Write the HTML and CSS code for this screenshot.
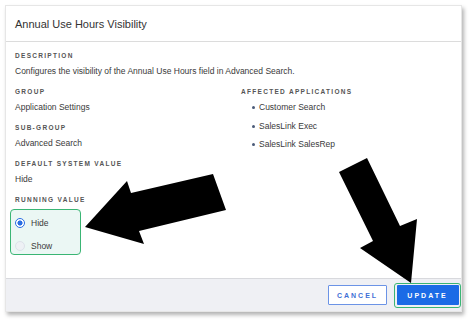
FILE: index.html
```html
<!DOCTYPE html>
<html lang="en">
<head>
  <meta charset="UTF-8" />
  <title>Annual Use Hours Visibility</title>
  <link rel="stylesheet" href="styles.css">
</head>
<body>
  <div class="dialog">
    <div class="dialog-header">Annual Use Hours Visibility</div>

    <div class="dialog-body">
      <div class="field wide">
        <div class="label">Description</div>
        <div class="value">Configures the visibility of the Annual Use Hours field in Advanced Search.</div>
      </div>

      <div class="col">
        <div class="field">
          <div class="label">Group</div>
          <div class="value">Application Settings</div>
        </div>
        <div class="field">
          <div class="label">Sub-Group</div>
          <div class="value">Advanced Search</div>
        </div>
        <div class="field">
          <div class="label">Default System Value</div>
          <div class="value">Hide</div>
        </div>
        <div class="field">
          <div class="label">Running Value</div>
          <div class="radio-box">
            <div class="radio-row"><span class="radio checked"></span>Hide</div>
            <div class="radio-row"><span class="radio"></span>Show</div>
          </div>
        </div>
      </div>

      <div class="col">
        <div class="field">
          <div class="label">Affected Applications</div>
          <ul class="apps">
            <li>Customer Search</li>
            <li>SalesLink Exec</li>
            <li>SalesLink SalesRep</li>
          </ul>
        </div>
      </div>
    </div>

    <div class="dialog-footer">
      <button class="btn btn-cancel">Cancel</button>
      <span class="highlight"><button class="btn btn-update">Update</button></span>
    </div>
  </div>

  <!-- annotation arrows drawn over the screenshot -->
  <svg class="arrows" width="474" height="323" viewBox="0 0 474 323">
    <polygon points="85,227 127,181 131,193 213,174 226,210 139,231 144,244" />
    <polygon points="339,172 367,158 400,226 417,219 411,283 360,248 373,241" />
  </svg>
</body>
</html>
```

FILE: styles.css
```css
body {
  margin: 0;
  width: 474px;
  height: 323px;
  background: #fff;
  font-family: "Liberation Sans", Arial, sans-serif;
  color: #3a3a3a;
  position: relative;
  overflow: hidden;
}

.dialog {
  margin: 5px 0 0 5px;
  width: 457px;
  height: 307px;
  background: #fff;
  border: 1px solid #e6e6e6;
  box-sizing: border-box;
  box-shadow: 2px 3px 4px rgba(0, 0, 0, 0.3);
  display: flex;
  flex-direction: column;
}

.dialog-header {
  height: 35px;
  padding-left: 9px;
  display: flex;
  align-items: center;
  font-size: 11px;
  color: #333;
  border-bottom: 1px solid #dcdcdc;
}

.dialog-body {
  flex: 1;
  padding: 9px 9px 0 9px;
  display: grid;
  grid-template-columns: 226px 1fr;
  align-content: start;
}

.wide {
  grid-column: 1 / 3;
}

.field {
  margin-bottom: 10px;
}

.label {
  font-size: 6.5px;
  font-weight: bold;
  letter-spacing: 1.3px;
  text-transform: uppercase;
  color: #555;
  line-height: 10px;
  margin-bottom: 4px;
}

.value {
  font-size: 8.5px;
  line-height: 12px;
  color: #3a3a3a;
}

.apps {
  margin: 0;
  padding: 0 0 0 11px;
  font-size: 8.5px;
  line-height: 18.5px;
  color: #3a3a3a;
  list-style: none;
}

.apps li {
  position: relative;
  padding-left: 7px;
  margin-top: -3px;
  margin-bottom: 3px;
}

.apps li::before {
  content: "";
  position: absolute;
  left: 0;
  top: 8px;
  width: 3px;
  height: 3px;
  border-radius: 50%;
  background: #4a5a78;
}

.radio-box {
  margin-left: -5px;
  width: 71px;
  height: 46px;
  box-sizing: border-box;
  border: 1.5px solid #3ab574;
  border-radius: 4px;
  background: #ebf7f4;
  padding: 1px 0 0 4px;
  font-size: 8.5px;
  color: #3a3a3a;
}

.radio-row {
  height: 23px;
  display: flex;
  align-items: center;
  gap: 6px;
}

.radio {
  width: 10px;
  height: 10px;
  box-sizing: border-box;
  border-radius: 50%;
  border: 1px solid #dde2ea;
  background: #eef1f5;
}

.radio.checked {
  border: 1.5px solid #2a6ee3;
  background: radial-gradient(circle, #2a6ee3 0 2.3px, #fff 2.8px);
}

.dialog-footer {
  height: 32px;
  background: #eff0f4;
  border-top: 1px solid #d8d9dd;
  display: flex;
  align-items: center;
  justify-content: flex-end;
  gap: 7px;
  padding-right: 0;
}

.btn {
  font-family: "Liberation Sans", Arial, sans-serif;
  font-size: 7px;
  font-weight: bold;
  letter-spacing: 2px;
  text-transform: uppercase;
  height: 20px;
  padding: 0;
  border-radius: 1px;
}

.btn-cancel {
  width: 59px;
  background: #fff;
  color: #3f6fd6;
  border: 1px solid #6b93e6;
}

.highlight {
  display: flex;
  padding: 1.5px;
  border: 1.5px solid #3ab574;
  border-radius: 3px;
}

.btn-update {
  width: 62px;
  background: #1b6be6;
  color: #fff;
  border: none;
}

.arrows {
  position: absolute;
  left: 0;
  top: 0;
  fill: #000;
  pointer-events: none;
}
```
